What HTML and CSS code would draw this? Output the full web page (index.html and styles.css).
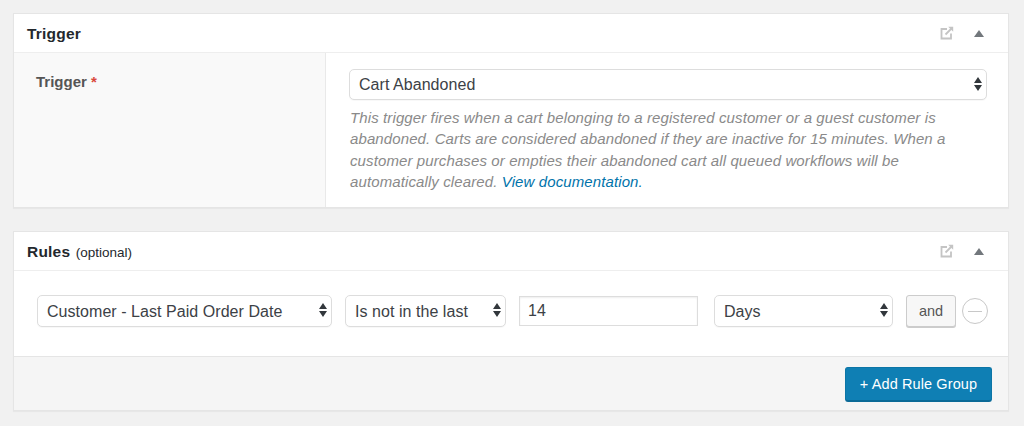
FILE: index.html
```html
<!DOCTYPE html>
<html>
<head>
  <title>Workflow - Trigger and Rules</title>
  <link rel="stylesheet" href="styles.css">
</head>
<body>
  <section class="box box-trigger">
    <header class="box-head">
      <h2>Trigger</h2>
      <div class="box-actions">
        <svg class="icon-open" width="14" height="14" viewBox="0 0 14 14"><path d="M7 3H1.500v9.500H11V7.500" fill="none" stroke="#c4c4c4" stroke-width="1.800"/><path d="M5.500 8.500 12 2" fill="none" stroke="#c4c4c4" stroke-width="1.800"/><path d="M8.200 .8H13.200V5.800Z" fill="#c4c4c4"/></svg>
        <svg class="icon-toggle" width="10" height="7" viewBox="0 0 10 7"><path d="M5 0 10 7H0Z" fill="#72777c"/></svg>
      </div>
    </header>
    <div class="trigger-row">
      <div class="trigger-label"><label for="trigger">Trigger <span class="req">*</span></label></div>
      <div class="trigger-field">
        <div class="select-wrap select-full">
          <select id="trigger"><option>Cart Abandoned</option></select>
          <svg class="arrows" width="8" height="14" viewBox="0 0 8 14"><path d="M4 0 8 6H0Z M0 8H8L4 14Z" fill="#32373c"/></svg>
        </div>
        <p class="desc">This trigger fires when a cart belonging to a registered customer or a guest customer is abandoned. Carts are considered abandoned if they are inactive for 15 minutes. When a customer purchases or empties their abandoned cart all queued workflows will be automatically cleared. <a href="#">View documentation.</a></p>
      </div>
    </div>
  </section>

  <section class="box box-rules">
    <header class="box-head">
      <h2>Rules <small>(optional)</small></h2>
      <div class="box-actions">
        <svg class="icon-open" width="14" height="14" viewBox="0 0 14 14"><path d="M7 3H1.500v9.500H11V7.500" fill="none" stroke="#c4c4c4" stroke-width="1.800"/><path d="M5.500 8.500 12 2" fill="none" stroke="#c4c4c4" stroke-width="1.800"/><path d="M8.200 .8H13.200V5.800Z" fill="#c4c4c4"/></svg>
        <svg class="icon-toggle" width="10" height="7" viewBox="0 0 10 7"><path d="M5 0 10 7H0Z" fill="#72777c"/></svg>
      </div>
    </header>
    <div class="rule-row">
      <div class="select-wrap select-rule">
        <select><option>Customer - Last Paid Order Date</option></select>
        <svg class="arrows" width="8" height="14" viewBox="0 0 8 14"><path d="M4 0 8 6H0Z M0 8H8L4 14Z" fill="#32373c"/></svg>
      </div>
      <div class="select-wrap select-compare">
        <select><option>Is not in the last</option></select>
        <svg class="arrows" width="8" height="14" viewBox="0 0 8 14"><path d="M4 0 8 6H0Z M0 8H8L4 14Z" fill="#32373c"/></svg>
      </div>
      <input class="rule-value" type="text" value="14">
      <div class="select-wrap select-unit">
        <select><option>Days</option></select>
        <svg class="arrows" width="8" height="14" viewBox="0 0 8 14"><path d="M4 0 8 6H0Z M0 8H8L4 14Z" fill="#32373c"/></svg>
      </div>
      <button class="btn-and" type="button">and</button>
      <button class="btn-remove" type="button" aria-label="Remove"><span></span></button>
    </div>
    <footer class="box-foot">
      <button class="btn-primary" type="button">+ Add Rule Group</button>
    </footer>
  </section>
</body>
</html>
```

FILE: styles.css
```css
* {
  margin: 0;
  padding: 0;
  box-sizing: border-box;
}

body {
  font-family: "Liberation Sans", Arial, sans-serif;
  background: #f1f1f1;
  color: #32373c;
  padding: 13px 15px 0 13px;
  height: 426px;
  overflow: hidden;
}

.box {
  background: #fff;
  border: 1px solid #e5e5e5;
  box-shadow: 0 1px 1px rgba(0, 0, 0, 0.04);
}

.box-trigger {
  height: 195px;
  margin-bottom: 23px;
}

.box-rules {
  height: 180px;
}

.box-head {
  height: 39px;
  display: flex;
  align-items: center;
  justify-content: space-between;
  padding: 0 24px 0 13px;
  border-bottom: 1px solid #eee;
}

h2 {
  font-size: 15.500px;
  font-weight: 700;
  letter-spacing: 0.2px;
  color: #23282d;
  padding-top: 1px;
}

h2 small {
  font-size: 13.500px;
  font-weight: 400;
  letter-spacing: 0;
  margin-left: 1px;
}

.box-actions {
  display: flex;
  align-items: center;
  gap: 20px;
}

.trigger-row {
  display: flex;
  height: 154px;
}

.trigger-label {
  width: 312px;
  flex: none;
  background: #f9f9f9;
  border-right: 1px solid #e9e9e9;
  padding: 20px 0 0 22px;
  font-size: 15px;
  font-weight: 700;
  color: #555;
}

.req {
  color: #d9483b;
}

.trigger-field {
  flex: 1;
  padding: 16px 21px 0 23px;
}

.select-wrap {
  position: relative;
}

.select-wrap select {
  display: block;
  width: 100%;
  height: 31px;
  appearance: none;
  -webkit-appearance: none;
  background: #fff;
  border: 1px solid #ddd;
  border-radius: 5px;
  font-family: inherit;
  font-size: 16px;
  letter-spacing: 0.05px;
  color: #3c4146;
  padding: 0 20px 1px 9px;
  box-shadow: 0 1px 1px rgba(0, 0, 0, 0.03);
}

.arrows {
  position: absolute;
  right: 5px;
  top: 8px;
  pointer-events: none;
}

.desc {
  margin-top: 7px;
  padding-left: 1px;
  font-size: 15px;
  line-height: 21.300px;
  font-style: italic;
  letter-spacing: 0.11px;
  color: #8a8a8a;
}

.desc a {
  color: #0073aa;
  text-decoration: none;
}

.rule-row {
  height: 86px;
  display: flex;
  align-items: flex-start;
  padding: 24px 0 0 23px;
  border-bottom: 1px solid #e5e5e5;
}

.rule-row .select-wrap select {
  height: 32px;
  padding-bottom: 0;
}

.select-rule {
  width: 295px;
  margin-right: 13px;
}

.select-compare {
  width: 161px;
  margin-right: 13px;
}

.rule-value {
  width: 179px;
  height: 30px;
  margin-top: 1px;
  margin-right: 16px;
  border: 1px solid #ddd;
  background: #fff;
  font-family: inherit;
  font-size: 16px;
  color: #3c4146;
  padding: 0 8px;
  box-shadow: inset 0 1px 2px rgba(0, 0, 0, 0.07);
}

.select-unit {
  width: 179px;
  margin-right: 13px;
}

.btn-and {
  width: 50px;
  height: 32px;
  background: #f7f7f7;
  border: 1px solid #ccc;
  border-radius: 3px;
  box-shadow: 0 1px 0 #ccc;
  font-family: inherit;
  font-size: 14.500px;
  color: #555;
  margin-right: 6px;
}

.btn-remove {
  width: 26px;
  height: 26px;
  margin-top: 3px;
  background: #fff;
  border: 1px solid #c8c8c8;
  border-radius: 50%;
  display: flex;
  align-items: center;
  justify-content: center;
}

.btn-remove span {
  display: block;
  width: 14px;
  height: 1px;
  background: #c8c8c8;
}

.box-foot {
  height: 53px;
  background: #f5f5f5;
  display: flex;
  justify-content: flex-end;
  align-items: flex-start;
  padding: 10px 16px 0 0;
}

.btn-primary {
  width: 147px;
  height: 35px;
  background: #0f7fb4;
  border: 1px solid #0c75a6;
  border-bottom: 2px solid #0b6a97;
  border-radius: 3px;
  font-family: inherit;
  font-size: 14.500px;
  letter-spacing: 0.1px;
  color: #fff;
}
```
